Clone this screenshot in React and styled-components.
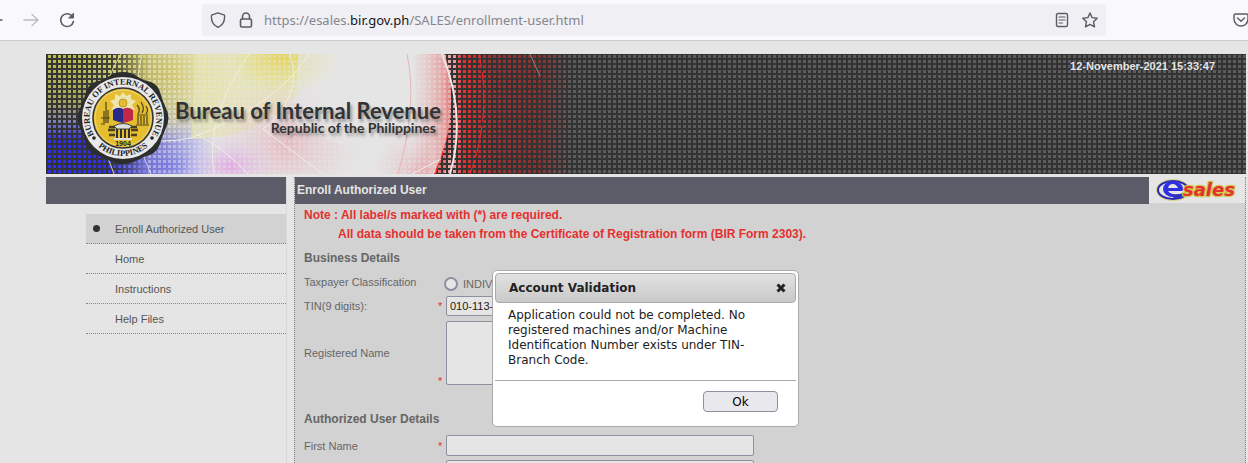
import { useState } from "react";
import styled, { createGlobalStyle } from "styled-components";

const GlobalStyle = createGlobalStyle`
  * {
    box-sizing: border-box;
  }

  html, body {
    margin: 0;
    height: 100%;
    overflow: hidden;
  }

  body {
    background-color: #e5e5e5;
    color: #666;
    font-family: "Liberation Sans", Arial, sans-serif;
    font-size: 11px;
  }
`;

/* browser toolbar */

const Toolbar = styled.header`
  display: flex;
  align-items: center;
  height: 41px;
  overflow: hidden;
  background-color: #f9f9fb;
  border-bottom: 1px solid #ccc;
`;

const NavButtons = styled.nav`
  display: flex;
  align-items: center;
  gap: 20px;
  width: 202px;
`;

const IconButton = styled.button`
  display: flex;
  flex-shrink: 0;
  justify-content: ${(props) => (props.$clipped ? "flex-end" : "center")};
  width: ${(props) => (props.$clipped ? "3px" : "16px")};
  padding: 0;
  overflow: hidden;
  border: 0;
  background: none;
  color: ${(props) => (props.$muted ? "#bcbcc2" : "#5b5b66")};

  svg {
    flex-shrink: 0;
  }
`;

const AddressBar = styled.div`
  display: flex;
  flex: 1;
  align-items: center;
  gap: 12px;
  height: 32px;
  padding: 0 8px;
  border-radius: 4px;
  background-color: #f0f0f4;
`;

const Address = styled.div`
  flex: 1;
  margin-left: -2px;
  font-family: "Noto Sans", sans-serif;
  font-size: 13px;
  color: #85858e;
  white-space: nowrap;

  b {
    font-weight: 400;
    color: #15141a;
  }
`;

const ToolbarEnd = styled.div`
  display: flex;
  justify-content: flex-end;
  width: 143px;
  margin-right: -1px;
`;

/* page */

const Page = styled.div`
  padding: 13px 2px 0 46px;
`;

const Banner = styled.div`
  display: flex;
  position: relative;
  align-items: center;
  height: 120px;
  overflow: hidden;
  padding-left: 31px;
`;

const BannerArt = styled.svg`
  position: absolute;
  inset: 0;
  width: 100%;
  height: 100%;
`;

const SealArt = styled.svg`
  position: relative;
  margin-top: 7px;
`;

const Brand = styled.div`
  display: flex;
  position: relative;
  flex-direction: column;
  align-items: flex-end;
  padding: 8px 0 0 5px;
  font-family: Lato, "Open Sans", sans-serif;
  font-weight: 700;
  color: #333;
  text-shadow: 2px 3px 3px rgba(0, 0, 0, 0.35);
  white-space: nowrap;
`;

const BrandName = styled.h1`
  margin: 0;
  font-size: 22px;
  line-height: 20px;
`;

const BrandSub = styled.p`
  margin: 0;
  padding-right: 5px;
  font-size: 14px;
  line-height: 14px;
`;

const Clock = styled.time`
  position: relative;
  align-self: flex-start;
  margin-left: auto;
  padding: 5px 31px 0 0;
  font-size: 11px;
  line-height: 14px;
  font-weight: 700;
  color: #e5e5e5;
`;

const Columns = styled.div`
  display: flex;
  gap: 7px;
  margin-top: 3px;
`;

const Sidebar = styled.aside`
  width: 241px;
  flex-shrink: 0;
  border-right: 1px dotted #d0d0d0;
`;

const SidebarHead = styled.div`
  height: 27px;
  background-color: #5c5c68;
`;

const Menu = styled.ul`
  margin: 10px 0 0 40px;
  padding: 0;
  list-style: none;
`;

const MenuItem = styled.li`
  border-bottom: 1px dotted #888;
  background-color: ${(props) => (props.$active ? "#d2d2d2" : "transparent")};
`;

const MenuLink = styled.a`
  display: flex;
  align-items: center;
  height: 29px;
  color: #555;
  text-decoration: none;
`;

const Bullet = styled.span`
  width: 7px;
  height: 7px;
  margin: 0 15px 0 7px;
  border-radius: 50%;
  background-color: ${(props) => (props.$active ? "#333" : "transparent")};
`;

const Main = styled.main`
  flex: 1;
  border-left: 1px dotted #888;
  border-right: 1px dotted #888;
  background-color: #d2d2d2;
`;

const MainHead = styled.div`
  display: flex;
  height: 27px;
`;

const MainTitle = styled.h2`
  flex: 1;
  margin: 0;
  padding-left: 2px;
  background-color: #5c5c68;
  color: #e5e5e5;
  font-size: 12px;
  line-height: 27px;
`;

const LogoBox = styled.div`
  width: 96px;
  height: 26px;
  background-color: #e5e5e5;
`;

const Form = styled.form`
  padding: 2px 9px 0;
`;

const Note = styled.p`
  margin: 0;
  padding-left: ${(props) => (props.$indent ? "34px" : "0")};
  color: #e53030;
  font-size: 12px;
  font-weight: 700;
  line-height: 19px;
`;

const SectionTitle = styled.h3`
  margin: ${(props) => (props.$spaced ? "22px 0 4px" : "4px 0 3px")};
  font-size: 12px;
  line-height: 20px;
`;

const Field = styled.div`
  display: grid;
  grid-template-columns: 134px 8px minmax(0, 308px);
  align-items: center;
  min-height: ${(props) => (props.$tight ? "22px" : "25px")};
`;

const Required = styled.span`
  align-self: ${(props) => (props.$bottom ? "end" : "center")};
  color: #e53030;
`;

const TextInput = styled.input`
  width: 100%;
  height: ${(props) => (props.$small ? "20px" : "21px")};
  padding: 0 3px;
  border: 1px solid #8f8f9d;
  border-radius: 2px;
  background-color: #e5e5e5;
  color: #222;
  font-family: "Liberation Sans", Arial, sans-serif;
  font-size: 11px;
`;

const TextBox = styled.textarea`
  display: block;
  width: 100%;
  height: 64px;
  margin: 3px 0 2px;
  border: 1px solid #8f8f9d;
  border-radius: 2px;
  background-color: #e5e5e5;
  resize: none;
`;

const RadioLabel = styled.label`
  display: flex;
  align-items: center;
  gap: 5px;
  padding-top: 4px;
`;

const Radio = styled.input`
  appearance: none;
  width: 14px;
  height: 14px;
  margin: 0 0 0 -2px;
  border: 2px solid #8f8f9d;
  border-radius: 50%;
  background-color: #e5e5e5;
`;

/* dialog */

const Dialog = styled.section`
  position: absolute;
  top: 270px;
  left: 492px;
  width: 307px;
  padding: 2px;
  border: 1px solid #aaa;
  border-radius: 5px;
  background-color: #fff;
  color: #222;
  font-family: "DejaVu Sans", Verdana, sans-serif;
  font-size: 12px;
`;

const DialogHead = styled.div`
  display: flex;
  align-items: center;
  justify-content: space-between;
  height: 30px;
  padding: 0 9px 0 13px;
  border: 1px solid #aaa;
  border-radius: 4px;
  background: linear-gradient(#e2e2e2, #c9c9c9);
`;

const DialogTitle = styled.h4`
  margin: 0;
  font-size: 12px;
`;

const CloseButton = styled.button`
  display: flex;
  padding: 0;
  border: 0;
  background: none;
  color: #222;
`;

const DialogText = styled.p`
  margin: 0;
  padding: 5px 16px 12px 13px;
  line-height: 15px;
`;

const DialogActions = styled.div`
  display: flex;
  justify-content: flex-end;
  padding: 10px 18px 12px;
  border-top: 1px solid #aaa;
`;

const OkButton = styled.button`
  width: 75px;
  height: 21px;
  padding: 0;
  border: 1px solid #8f8f9d;
  border-radius: 4px;
  background-color: #e9e9ed;
  color: #000;
  font-family: "DejaVu Sans", Verdana, sans-serif;
  font-size: 12px;
`;

const menuItems = ["Enroll Authorized User", "Home", "Instructions", "Help Files"];

function Icon({ children, width = 1.4 }) {
  return (
    <svg
      width="16"
      height="16"
      viewBox="0 0 16 16"
      fill="none"
      stroke="currentColor"
      strokeWidth={width}
      strokeLinecap="round"
      strokeLinejoin="round"
      aria-hidden="true"
    >
      {children}
    </svg>
  );
}

function BannerBackground() {
  return (
    <BannerArt aria-hidden="true">
      <defs>
        <pattern id="mesh" width="5" height="5" patternUnits="userSpaceOnUse">
          <path d="M0 0H5V1H0ZM0 4H5V5H0ZM0 1H2V4H0Z" fill="#333" />
        </pattern>
        <linearGradient id="left" x1="0" x2="150" gradientUnits="userSpaceOnUse">
          <stop offset="0" stopColor="#fff" />
          <stop offset="0.45" stopColor="#fff" stopOpacity="0.9" />
          <stop offset="0.68" stopColor="#fff" stopOpacity="0.15" />
          <stop offset="1" stopColor="#fff" stopOpacity="0" />
        </linearGradient>
        <mask id="meshMask" maskUnits="userSpaceOnUse" x="0" y="0" width="4000" height="120">
          <rect width="150" height="120" fill="url(#left)" />
          <path d="M399 0Q415 60 390 120H4000V0Z" fill="#fff" />
        </mask>
        <linearGradient id="leftTone" x1="0" x2="0" y1="0" y2="1">
          <stop offset="0" stopColor="#bdbd55" />
          <stop offset="0.4" stopColor="#a6a660" />
          <stop offset="0.56" stopColor="#8080b0" />
          <stop offset="0.72" stopColor="#3030e0" />
          <stop offset="1" stopColor="#3030e8" />
        </linearGradient>
        <linearGradient id="leftFade">
          <stop offset="0" stopColor="#e5e5e5" stopOpacity="0" />
          <stop offset="0.4" stopColor="#e5e5e5" stopOpacity="0" />
          <stop offset="1" stopColor="#e5e5e5" />
        </linearGradient>
        <linearGradient id="redTone">
          <stop offset="0" stopColor="#e5e5e5" />
          <stop offset="0.1" stopColor="#e5d0d0" />
          <stop offset="0.16" stopColor="#e87878" />
          <stop offset="0.24" stopColor="#e53030" />
          <stop offset="0.45" stopColor="#963232" />
          <stop offset="0.78" stopColor="#883232" />
          <stop offset="1" stopColor="#5c5c5c" />
        </linearGradient>
        <radialGradient id="yellow">
          <stop offset="0" stopColor="#e4d35c" />
          <stop offset="0.7" stopColor="#e4e29c" stopOpacity="0.7" />
          <stop offset="1" stopColor="#e5e5c0" stopOpacity="0" />
        </radialGradient>
        <radialGradient id="pink">
          <stop offset="0" stopColor="#e5b0b8" stopOpacity="0.8" />
          <stop offset="1" stopColor="#e5d0d0" stopOpacity="0" />
        </radialGradient>
        <radialGradient id="violet">
          <stop offset="0" stopColor="#e2a8e2" />
          <stop offset="1" stopColor="#dcd0ec" stopOpacity="0" />
        </radialGradient>
        <radialGradient id="lilac">
          <stop offset="0" stopColor="#7a7af0" stopOpacity="0.8" />
          <stop offset="1" stopColor="#d0d0f0" stopOpacity="0" />
        </radialGradient>
        <linearGradient id="rim">
          <stop offset="0" stopColor="#e56060" stopOpacity="0" />
          <stop offset="1" stopColor="#e56060" stopOpacity="0.6" />
        </linearGradient>
        <linearGradient id="crescent" x1="0" x2="0" y1="0" y2="1">
          <stop offset="0" stopColor="#e52020" stopOpacity="0" />
          <stop offset="0.7" stopColor="#e52020" />
        </linearGradient>
        <pattern id="lightMesh" width="5" height="5" patternUnits="userSpaceOnUse">
          <path d="M2 1H5V4H2Z" fill="#e5e5e5" fillOpacity="0.4" />
        </pattern>
      </defs>
      <rect width="100%" height="120" fill="#5c5c5c" />
      <rect width="430" height="120" fill="#e5e5e5" />
      <rect width="170" height="120" fill="url(#leftTone)" />
      <rect width="171" height="120" fill="url(#leftFade)" />
      <ellipse cx="120" cy="20" rx="85" ry="70" fill="url(#yellow)" opacity="0.65" />
      <path d="M150 0H250Q280 25 246 45Q210 85 145 85Z" fill="#e5e3ae" opacity="0.75" />
      <ellipse cx="236" cy="2" rx="60" ry="42" fill="url(#yellow)" />
      <ellipse cx="120" cy="112" rx="60" ry="34" fill="url(#lilac)" />
      <ellipse cx="240" cy="90" rx="80" ry="70" fill="url(#pink)" />
      <ellipse cx="185" cy="112" rx="48" ry="32" fill="url(#violet)" />
      <path d="M252 0H360Q375 70 330 92Q280 95 248 68Z" fill="#e5e5e5" opacity="0.6" />
      <ellipse cx="372" cy="118" rx="50" ry="48" fill="url(#pink)" />
      <rect x="385" width="140" height="120" fill="url(#redTone)" />
      <rect x="366" width="44" height="120" fill="url(#rim)" />
      <path d="M406 50Q409 88 398 120H388Q402 90 406 50Z" fill="url(#crescent)" />
      <rect x="100" width="310" height="120" fill="url(#lightMesh)" />
      <rect width="100%" height="120" fill="url(#mesh)" mask="url(#meshMask)" />
      <g fill="none" stroke="#eeeee4" strokeWidth="1">
        <path d="M75 0Q40 55 68 120" stroke="#dede90" />
        <path d="M96 0Q80 70 105 120" opacity="0.7" />
        <path d="M203 0Q158 65 168 120" />
        <path d="M244 0Q258 42 217 75L277 120" />
        <path d="M263 0Q230 52 145 84Q116 90 88 84" />
        <path d="M150 80Q180 95 202 120" />
        <path d="M366 120L395 105" />
        <path d="M361 0Q372 50 352 120" stroke="#e5b5b5" />
        <path d="M433 0Q446 60 424 120" stroke="#e53030" strokeDasharray="14 4" />
        <path d="M484 0L494 22" stroke="#888" />
      </g>
      <path d="M396 0Q421 60 404 120" fill="none" stroke="#f0e5e5" strokeWidth="2" />
    </BannerArt>
  );
}

function Seal() {
  return (
    <SealArt width="93" height="94" viewBox="-46 -47 93 94" role="img" aria-label="BIR seal">
      <defs>
        <path id="arcTop" d="M-29 16.5A33.4 33.4 0 1 1 29 16.5" />
        <path id="arcBottom" d="M-30 23.4A38.2 38.2 0 0 0 30 23.4" />
      </defs>
      <path
        d="M0-46Q9-46 15-41Q21-37 28-36Q35-33 37-26Q39-19 42-12Q49 0 42 12Q39 19 37 26Q34 34 27 37Q21 38 15 42Q0 50-15 42Q-21 38-27 37Q-35 34-37 26Q-39 19-42 12Q-49 0-42-12Q-39-19-37-26Q-35-33-28-36Q-21-37-15-41Q-9-46 0-46Z"
        fill="#2c2e2e"
      />
      <circle r="41" fill="#e8e8e8" />
      <circle r="30" fill="#e5bd2e" stroke="#333" strokeWidth="1.6" />
      <circle r="28" fill="none" stroke="#eedc90" strokeWidth="0.8" />
      <g fill="#222" fontFamily="Liberation Serif, serif" fontWeight="700" fontSize="8.5">
        <text>
          <textPath href="#arcTop" startOffset="50%" textAnchor="middle">
            BUREAU OF INTERNAL REVENUE
          </textPath>
        </text>
        <text>
          <textPath href="#arcBottom" startOffset="50%" textAnchor="middle">
            PHILIPPINES
          </textPath>
        </text>
      </g>
      <circle cx="-29" cy="20" r="1.8" fill="#222" />
      <circle cx="29" cy="20" r="1.8" fill="#222" />
      <path
        d="M0-26L3-22L8-24L8-19L13-17L9-13L12-8H-12L-9-13L-13-17L-8-19L-8-24L-3-22Z"
        fill="#eee4b0"
      />
      <circle cy="-15" r="4" fill="#e5bd2e" stroke="#bd972b" />
      <path d="M-10-8Q-5-12 0-9V5Q-5 4-10 2Z" fill="#29298c" />
      <path d="M10-8Q5-12 0-9V5Q5 4 10 2Z" fill="#c02848" />
      <g stroke="#4b431f" strokeWidth="1.2" fill="none">
        <path d="M-17-16V5M-15-8V5M-19-7V5M-22 0H-13M-22 6H-18M14-13Q18-9 15-4M18-16Q22-10 19-5M23-12Q26-8 23-4" />
        <path d="M14-3H25M15-2V6M18-2V6M21-2V6M24-2V6M13 7H26" />
        <path d="M-14 9H-5M5 9H14M-15 12H-8M8 12H15M-14 17H-8M8 17H14" strokeWidth="2.4" />
      </g>
      <path d="M-9 8Q0 3 9 8L6 11H-6Z" fill="#ddd" stroke="#444" />
      <path d="M-6 11V20M-2 11V20M2 11V20M6 11V20" stroke="#333" strokeWidth="2" />
      <path d="M-9 21H9" stroke="#ddd" strokeWidth="2" />
      <text y="28" textAnchor="middle" fontFamily="Liberation Sans" fontSize="7" fontWeight="700" fill="#222">
        1904
      </text>
    </SealArt>
  );
}

function EsalesLogo() {
  return (
    <LogoBox>
      <svg width="96" height="26" role="img" aria-label="eSales">
        <ellipse cx="24" cy="13" rx="17" ry="11" fill="#d8d080" />
        <ellipse cx="24" cy="13" rx="15" ry="9" fill="#e5e5e5" stroke="#2828b8" strokeWidth="2" />
        <ellipse cx="24" cy="12" rx="10" ry="8" fill="#3030e0" />
        <path d="M19 11H29Q27 7 24 7Q20 7 19 11ZM19 14H34V18Q22 19 19 14Z" fill="#e5e5e5" />
        <path d="M22 17Q28 18 35 16L34 21Q26 23 22 19Z" fill="#3030c8" />
        <text
          x="34"
          y="19"
          fontFamily="DejaVu Sans, sans-serif"
          fontSize="18"
          fontWeight="700"
          fontStyle="italic"
          fill="#e53030"
          stroke="#d2ca50"
          strokeWidth="2.5"
          strokeLinejoin="round"
          paintOrder="stroke"
        >
          sales
        </text>
      </svg>
    </LogoBox>
  );
}

function BrowserToolbar() {
  return (
    <Toolbar>
      <NavButtons aria-label="Browser">
        <IconButton $clipped aria-label="Back">
          <Icon>
            <path d="M1 8H15M7 2L1 8L7 14" />
          </Icon>
        </IconButton>
        <IconButton $muted aria-label="Forward">
          <Icon>
            <path d="M1 8H15M9 2.5L15 8L9 13.5" />
          </Icon>
        </IconButton>
        <IconButton aria-label="Reload">
          <Icon width={1.6}>
            <path d="M13.2 4.2A6.4 6.4 0 1 0 14.4 9.5" />
            <path d="M14.5 1.5V6H10Z" fill="currentColor" strokeWidth="1" />
          </Icon>
        </IconButton>
      </NavButtons>
      <AddressBar>
        <IconButton aria-label="Tracking protection">
          <Icon>
            <path d="M8 .8L14.5 3.2C15 8 13 13 8 15.3C3 13 1 8 1.5 3.2Z" />
          </Icon>
        </IconButton>
        <IconButton aria-label="Connection">
          <Icon width={1.6}>
            <rect x="2.5" y="7" width="11" height="8" rx="1.5" />
            <path d="M4.5 7V4.5A3.5 3.5 0 0 1 11.5 4.5V7" />
          </Icon>
        </IconButton>
        <Address>
          https://esales.<b>bir.gov.ph</b>/SALES/enrollment-user.html
        </Address>
        <IconButton aria-label="Reader view">
          <Icon>
            <rect x="2.5" y="1.5" width="11" height="13" rx="1.5" />
            <path d="M5 5H11M5 8H11M5 11H8.5" strokeWidth="1.2" />
          </Icon>
        </IconButton>
        <IconButton aria-label="Bookmark">
          <Icon>
            <path d="M8 1L10.1 5.6L15.2 6.2L11.5 9.7L12.5 14.8L8 12.3L3.5 14.8L4.5 9.7L.8 6.2L5.9 5.6Z" />
          </Icon>
        </IconButton>
      </AddressBar>
      <ToolbarEnd>
        <IconButton aria-label="Save to Pocket">
          <Icon>
            <path d="M2.5 2H13.5Q15 2 15 3.5V7A7 7 0 0 1 1 7V3.5Q1 2 2.5 2ZM4.5 6L8 9.3L11.5 6" />
          </Icon>
        </IconButton>
      </ToolbarEnd>
    </Toolbar>
  );
}

function App() {
  const [dialogOpen, setDialogOpen] = useState(true);

  const closeDialog = () => setDialogOpen(false);

  return (
    <>
      <GlobalStyle />
      <BrowserToolbar />
      <Page>
        <Banner>
          <BannerBackground />
          <Seal />
          <Brand>
            <BrandName>Bureau of Internal Revenue</BrandName>
            <BrandSub>Republic of the Philippines</BrandSub>
          </Brand>
          <Clock>12-November-2021 15:33:47</Clock>
        </Banner>
        <Columns>
          <Sidebar>
            <SidebarHead />
            <Menu>
              {menuItems.map((item, index) => (
                <MenuItem key={item} $active={index === 0}>
                  <MenuLink href="#">
                    <Bullet $active={index === 0} />
                    {item}
                  </MenuLink>
                </MenuItem>
              ))}
            </Menu>
          </Sidebar>
          <Main>
            <MainHead>
              <MainTitle>Enroll Authorized User</MainTitle>
              <EsalesLogo />
            </MainHead>
            <Form>
              <Note>Note : All label/s marked with (*) are required.</Note>
              <Note $indent>
                All data should be taken from the Certificate of Registration
                form (BIR Form 2303).
              </Note>
              <SectionTitle>Business Details</SectionTitle>
              <Field $tight>
                <span>Taxpayer Classification</span>
                <span />
                <RadioLabel>
                  <Radio type="radio" name="classification" />
                  INDIVIDUAL
                </RadioLabel>
              </Field>
              <Field>
                <label htmlFor="tin">TIN(9 digits):</label>
                <Required>*</Required>
                <TextInput id="tin" $small defaultValue="010-113-" />
              </Field>
              <Field>
                <label htmlFor="registered">Registered Name</label>
                <Required $bottom>*</Required>
                <TextBox id="registered" />
              </Field>
              <SectionTitle $spaced>Authorized User Details</SectionTitle>
              <Field>
                <label htmlFor="first">First Name</label>
                <Required>*</Required>
                <TextInput id="first" />
              </Field>
              <Field>
                <span />
                <span />
                <TextInput aria-label="Middle name" />
              </Field>
            </Form>
          </Main>
        </Columns>
      </Page>
      {dialogOpen && (
        <Dialog role="dialog" aria-labelledby="dialog-title">
          <DialogHead>
            <DialogTitle id="dialog-title">Account Validation</DialogTitle>
            <CloseButton aria-label="Close" onClick={closeDialog}>
              <svg width="10" height="10" viewBox="0 0 10 10" aria-hidden="true">
                <path d="M1.5 1.5L8.5 8.5M8.5 1.5L1.5 8.5" stroke="currentColor" strokeWidth="3" />
              </svg>
            </CloseButton>
          </DialogHead>
          <DialogText>
            Application could not be completed. No registered machines and/or
            Machine Identification Number exists under TIN-Branch Code.
          </DialogText>
          <DialogActions>
            <OkButton onClick={closeDialog}>Ok</OkButton>
          </DialogActions>
        </Dialog>
      )}
    </>
  );
}

export default App;
